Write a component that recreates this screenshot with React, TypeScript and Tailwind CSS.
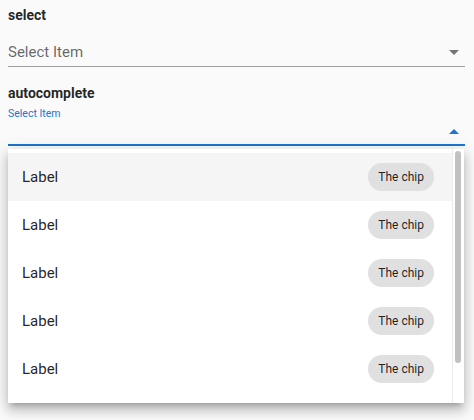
const ITEMS = ["Label", "Label", "Label", "Label", "Label"];

function Caret({ up, className }: { up?: boolean; className?: string }) {
  return (
    <svg width="10" height="5" viewBox="0 0 10 5" className={className}>
      {up ? <path d="M0 5 L5 0 L10 5 Z" fill="currentColor" /> : <path d="M0 0 L5 5 L10 0 Z" fill="currentColor" />}
    </svg>
  );
}

export default function App() {
  return (
    <div className="w-[474px] h-[420px] overflow-hidden bg-[#fafafa] px-2 font-['Roboto',sans-serif] text-[#000000de]">
      <h2 className="pt-[6px] text-[14px] font-bold leading-[18px]">select</h2>

      <div className="mr-[1px] mt-[14px] flex h-[29px] items-center justify-between border-b border-[#9e9e9e]">
        <span className="text-[15px] text-[#00000099]">Select Item</span>
        <Caret className="mr-[6px] text-[#757575]" />
      </div>

      <h2 className="mt-[17px] text-[14px] font-bold leading-[18px]">autocomplete</h2>

      <div className="mr-[1px] border-b-2 border-[#1976d2]">
        <div className="mt-[6px] text-[10.5px] leading-[12px] text-[#1976d2]">Select Item</div>
        <div className="flex h-[24px] items-center justify-end pb-[2px]">
          <Caret up className="mr-[6px] text-[#1976d2]" />
        </div>
      </div>

      <div className="relative mr-[2px] mt-[3px] h-[254px] overflow-hidden bg-white shadow-[0_5px_5px_-3px_rgba(0,0,0,0.2),0_8px_10px_1px_rgba(0,0,0,0.14),0_3px_14px_2px_rgba(0,0,0,0.12)]">
        <div className="pt-[4px] pr-[12px]">
          {ITEMS.map((label, i) => (
            <div
              key={i}
              className={`flex h-[48px] items-center justify-between pl-[14px] pr-[18px] ${i === 0 ? "bg-[#f5f5f5]" : ""}`}
            >
              <span className="text-[15px]">{label}</span>
              <span className="flex h-[28px] items-center rounded-full bg-[#e0e0e0] px-[10px] text-[12px]">The chip</span>
            </div>
          ))}
        </div>
        <div className="absolute right-0 top-0 h-full w-[12px] border-l border-[#ececec] bg-white">
          <div className="ml-[2px] mt-[2px] h-[212px] w-[6px] rounded-full bg-[#c1c1c1]" />
        </div>
      </div>
    </div>
  );
}
